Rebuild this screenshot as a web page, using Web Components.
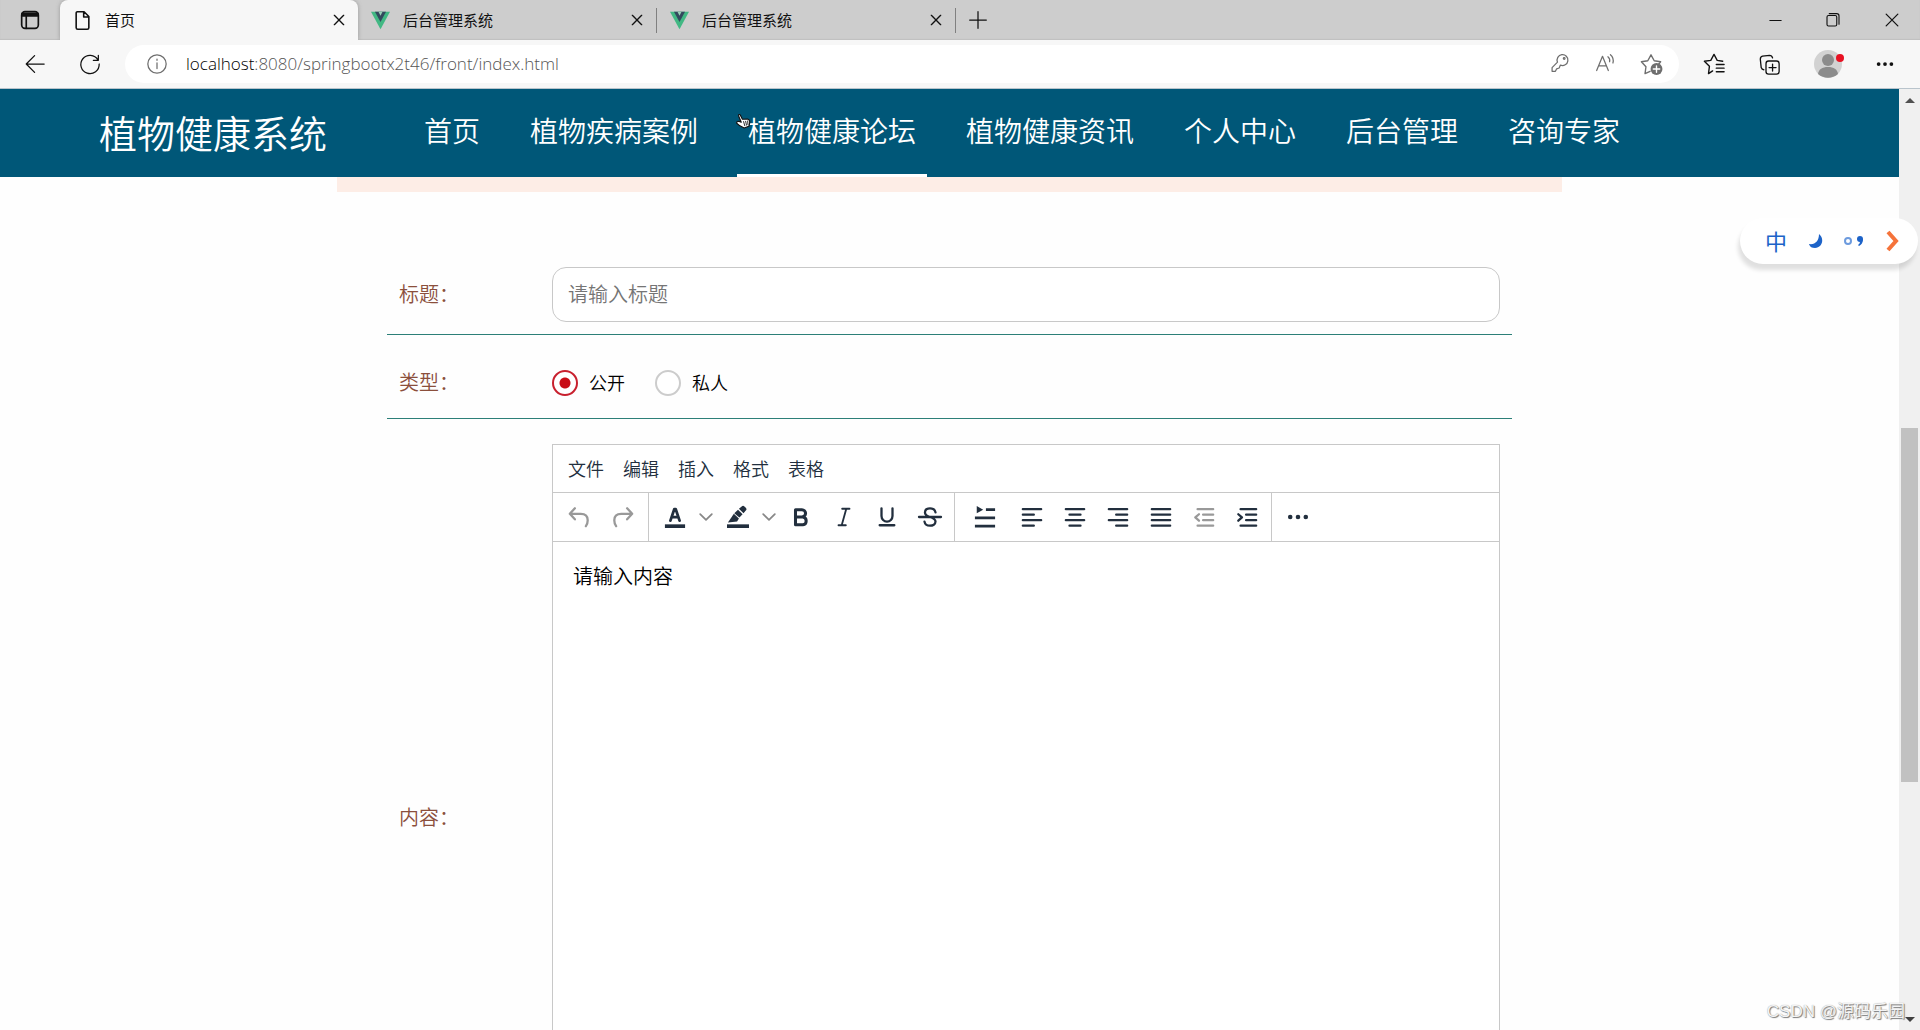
<!DOCTYPE html>
<html lang="zh-CN">
<head>
<meta charset="utf-8">
<title>首页</title>
<style>
    :root {
        --ui: "Open Sans", "Noto Sans CJK SC", sans-serif;
        --color-brand: #005778;
        --color-label: #8b4f3c;
        --color-rule: #2c7f78;
        --color-border: #c8c8c8;
        --color-ink: #222f3e;
    }
    body {
        margin: 0;
        height: 100vh;
        display: flex;
        flex-direction: column;
        overflow: hidden;
        position: relative;
        background: #fefefe;
        font-family: var(--ui);
        font-weight: 350;
    }
    main {
        flex: 1;
        min-height: 0;
        display: flex;
    }
    .page {
        flex: 1;
        min-width: 0;
        overflow: hidden;
    }
</style>
</head>
<body>

<browser-chrome></browser-chrome>
<main>
    <div class="page">
        <site-header></site-header>
        <post-form></post-form>
    </div>
    <scroll-track></scroll-track>
</main>
<ime-bar></ime-bar>
<page-watermark>CSDN @源码乐园</page-watermark>

<script>
// Line icons. All are drawn on a 24 x 24 grid.
const ICONS = {
    panel: '<rect x="2" y="2" width="20" height="20" rx="4"/><path d="M3 4.500h18M3 6.500h18" stroke-width="3"/><path d="M7.500 8v14"/>',
    file: '<path d="M4 2.500a1.500 1.500 0 0 1 1.500-1.500H14l6 6V21a2 2 0 0 1-2 2H6a2 2 0 0 1-2-2zM13.500 1v6.500H20"/>',
    vue: '<path d="M0 1h24L12 23z" fill="#41b883" stroke="none"/><path d="M5 1h14l-7 13z" fill="#34495e" stroke="none"/><path d="M9.500 1h5L12 6z" fill="#9ad1b8" stroke="none"/>',
    close: '<path d="M5 5l14 14M19 5L5 19"/>',
    plus: '<path d="M12 2v20M2 12h20"/>',
    minimize: '<path d="M4 12h16"/>',
    restore: '<rect x="4" y="6" width="13" height="14" rx="2"/><path d="M7 3.500h10a3 3 0 0 1 3 3v11"/>',
    back: '<path d="M23 12H1.500M11.500 2L1.500 12l10 10"/>',
    reload: '<path d="M21.500 7A11 11 0 1 0 23 12M22 1.500V7.500h-6"/>',
    info: '<circle cx="12" cy="12" r="11"/><path d="M12 10.500v7M12 6v1.500"/>',
    key: '<path d="M12.500 14.500a6.500 6.500 0 1 0-3.500-3.500L2.500 17.500V22h4l1.500-3 3-1z"/><circle cx="17" cy="6.500" r="1"/>',
    read: '<path d="M2 21L9 4l7 17M4.500 15.500h9M15.500 4.500c2 1.500 2.500 4 2 6M18.500 2c3 2.500 4 6 3 10"/>',
    starAdd: '<path d="M11 20l-5.500 2.500 1-7.500L1.500 9.500l7-1L12 2l3.500 6.500 7 1-2 2.500"/><circle cx="18" cy="17.500" r="6.500" fill="#6e6e6e" stroke="none"/><path d="M18 14v7M14.500 17.500h7" stroke="#fff"/>',
    starList: '<path d="M10.500 19.500L6 22.500l1-8L1.500 9l7-1L12 1.500 15.500 8l6 1M14.500 12.500H23M14.500 16.500H23M14.500 20.500H23"/>',
    collect: '<rect x="8" y="8" width="15" height="15" rx="3"/><path d="M15.500 11.500v8M11.500 15.500h8M5.500 18c-2 0-2.500-1-3-2.500L1.500 6c0-2 .5-3 2.500-3.500L12 1.500c2 0 3 1 3.500 3"/>',
    dots: '<g fill="currentColor" stroke="none"><circle cx="3.500" cy="12" r="2.500"/><circle cx="12" cy="12" r="2.500"/><circle cx="20.500" cy="12" r="2.500"/></g>',
    undo: '<path d="M7.500 2.500L2 8.500l5.500 6M2.500 8.500H14c5 0 7.500 3 7.500 7 0 2.500-.5 4.500-2 6.500"/>',
    redo: '<path d="M16.500 2.500l5.500 6-5.500 6M21.500 8.500H10c-5 0-7.500 3-7.500 7 0 2.500.5 4.500 2 6.500"/>',
    caret: '<path d="M2 7l10 10L22 7"/>',
    foreColor: '<path d="M7 16L11.200 3.500h1.600L17 16M8.500 12h7" stroke-width="3"/><path d="M1 22h22" stroke-width="4" stroke-linecap="butt"/>',
    backColor: '<g fill="currentColor" stroke="none"><path d="M13 3l3-2.500c1-1 2-1 3 0L20.500 2c1 1 1 2 0 3l-2.500 3z"/><path d="M12 4l5 5-3.500 3.500L8 8z"/><path d="M7.500 8.500l5.500 5-2 3.500L1 18z"/></g><path d="M0 22h24" stroke-width="4" stroke-linecap="butt"/>',
    bold: '<path d="M6 4h7a4 4 0 0 1 0 8H6zM6 12h8a4.300 4.300 0 0 1 0 8.500H6z" stroke-width="3.300"/>',
    italic: '<path d="M10 3h8M6 21h8M14.500 3l-5 18" stroke-width="2"/>',
    underline: '<path d="M6 2.500v8.500a6 6 0 0 0 12 0V2.500M4 21h16"/>',
    strike: '<path d="M18 7c-.5-3-3-4.500-6-4.500S6.500 4 6.500 7 9 11 12 12s6 2 6 5-3 4.500-6 4.500S6.500 20 6 17M0 12h24"/>',
    lineHeight: '<path d="M3 0l7 4-7 4z" fill="currentColor" stroke="none"/><path d="M13 4h10M1 13h22M1 22h22" stroke-width="3" stroke-linecap="butt"/>',
    left: '<path d="M2 3.500h20M2 9.500h12M2 15.500h20M2 21.500h12"/>',
    center: '<path d="M2 3.500h20M6 9.500h12M2 15.500h20M6 21.500h12"/>',
    right: '<path d="M2 3.500h20M10 9.500h12M2 15.500h20M10 21.500h12"/>',
    justify: '<path d="M2 3.500h20M2 9.500h20M2 15.500h20M2 21.500h20"/>',
    outdent: '<path d="M5 3.500h17M11 9.500h11M11 15.500h11M5 21.500h17M6.500 9l-4 3.500 4 3.500"/>',
    indent: '<path d="M5 3.500h17M11 9.500h11M11 15.500h11M5 21.500h17M2.500 9l4 3.500-4 3.500"/>',
    hand: '<path d="M9 14L4.500 3.500C3.500 1 6.500 0 7.500 2L11 9l9-.5c2 .5 3 1.500 3.500 4 .5 3-.5 5.500-1.500 8.500l-8 3C9.500 22 5 20 1 15.500c0-3 4-4 8-1.500z" fill="#fff" stroke="#111"/><path d="M13 13l2 7M16.500 12.500l1.500 6.500M20 12l.5 6" stroke="#111" stroke-width="1.500"/>'
};

customElements.define('ui-icon', class extends HTMLElement {
    constructor() {
        super();
        const size = this.getAttribute('size') || 20;
        const weight = this.getAttribute('weight') || 1.5;
        const shadowRoot = this.attachShadow({mode: 'open'});
        shadowRoot.innerHTML = `
        <style>
            :host { display: inline-flex; flex: none; }
            svg { display: block; overflow: visible; }
        </style>
        <svg width="${size}" height="${size}" viewBox="0 0 24 24" fill="none" stroke="currentColor"
             stroke-width="${weight}" stroke-linecap="round" stroke-linejoin="round" aria-hidden="true">
            ${ICONS[this.getAttribute('name')]}
        </svg>`;
    }
});

customElements.define('browser-tab', class extends HTMLElement {
    constructor() {
        super();
        const shadowRoot = this.attachShadow({mode: 'open'});
        shadowRoot.innerHTML = `
        <style>
            :host {
                display: flex;
                align-items: center;
                flex: 0 1 298px;
                height: 40px;
                box-sizing: border-box;
                padding: 0 11px 0 13px;
            }
            :host([active]) {
                background: #f7f7f7;
                border-radius: 8px 8px 0 0;
                box-shadow: 0 0 4px #999;
            }
            button {
                border: 0;
                padding: 0;
                background: none;
                font: inherit;
                font-weight: 400;
                color: #111;
                display: flex;
            }
            .tab__title {
                flex: 1;
                align-items: center;
                gap: 13px;
                font-size: 15px;
                line-height: 20px;
            }
        </style>
        <button class="tab__title"><ui-icon name="${this.getAttribute('icon')}" size="19" weight="2"></ui-icon><slot></slot></button>
        <button aria-label="关闭"><ui-icon name="close" size="16" weight="2"></ui-icon></button>`;
    }
});

customElements.define('browser-chrome', class extends HTMLElement {
    constructor() {
        super();
        const shadowRoot = this.attachShadow({mode: 'open'});
        shadowRoot.innerHTML = `
        <style>
            :host {
                display: block;
                flex: none;
                border-bottom: 1px solid #b9c4cc;
                background: #f7f7f7;
            }
            button {
                border: 0;
                padding: 0;
                background: none;
                color: #111;
                display: flex;
            }
            .tabs {
                display: flex;
                align-items: center;
                height: 40px;
                background: #cdcdcd;
                box-shadow: inset 0 -1px 1px #c0c0c0;
                overflow: hidden;
            }
            .tabs__panel { padding: 0 20px; }
            .tabs__rule {
                width: 1px;
                height: 25px;
                background: #808080;
            }
            .tabs__new { padding: 0 12px; }
            .window {
                margin-left: auto;
                display: flex;
                align-items: center;
                gap: 40px;
                padding-right: 18px;
            }
            .toolbar {
                display: flex;
                align-items: center;
                height: 48px;
            }
            .toolbar__nav {
                display: flex;
                gap: 35px;
                padding: 0 25px;
            }
            .address {
                flex: 1;
                display: flex;
                align-items: center;
                height: 38px;
                border-radius: 19px;
                background: #fff;
                padding: 0 17px 0 22px;
                color: #6e6e6e;
            }
            .address button { color: #6e6e6e; }
            .address__url {
                flex: 1;
                padding-left: 19px;
                font-size: 17px;
                font-weight: 320;
                line-height: 24px;
                color: #555;
            }
            .address__url b { font-weight: inherit; color: #000; }
            .address__tools { display: flex; gap: 25px; }
            .tools {
                display: flex;
                align-items: center;
                gap: 34px;
                padding: 0 26px 0 24px;
            }
            .avatar {
                position: relative;
                width: 28px;
                height: 28px;
            }
            .avatar__dot {
                position: absolute;
                top: 4px;
                right: -2px;
                width: 8px;
                height: 8px;
                border-radius: 50%;
                background: #e81123;
            }
        </style>
        <div class="tabs">
            <button class="tabs__panel" aria-label="标签页"><ui-icon name="panel" weight="2"></ui-icon></button>
            <browser-tab icon="file" active>首页</browser-tab>
            <browser-tab icon="vue">后台管理系统</browser-tab>
            <span class="tabs__rule"></span>
            <browser-tab icon="vue">后台管理系统</browser-tab>
            <span class="tabs__rule"></span>
            <button class="tabs__new" aria-label="新建标签页"><ui-icon name="plus"></ui-icon></button>
            <div class="window">
                <button aria-label="最小化"><ui-icon name="minimize" size="17"></ui-icon></button>
                <button aria-label="还原"><ui-icon name="restore" size="18"></ui-icon></button>
                <button aria-label="关闭窗口"><ui-icon name="close" size="20"></ui-icon></button>
            </div>
        </div>
        <div class="toolbar">
            <div class="toolbar__nav">
                <button aria-label="后退"><ui-icon name="back"></ui-icon></button>
                <button aria-label="刷新"><ui-icon name="reload"></ui-icon></button>
            </div>
            <div class="address">
                <ui-icon name="info"></ui-icon>
                <div class="address__url" role="textbox" aria-label="地址" tabindex="0"><b>localhost</b>:8080/springbootx2t46/front/index.html</div>
                <div class="address__tools">
                    <button aria-label="密码"><ui-icon name="key"></ui-icon></button>
                    <button aria-label="朗读"><ui-icon name="read"></ui-icon></button>
                    <button aria-label="收藏此页"><ui-icon name="starAdd" size="22"></ui-icon></button>
                </div>
            </div>
            <div class="tools">
                <button aria-label="收藏夹"><ui-icon name="starList" size="22"></ui-icon></button>
                <button aria-label="集锦"><ui-icon name="collect" size="21"></ui-icon></button>
                <button class="avatar" aria-label="用户">
                    <svg width="28" height="28" viewBox="0 0 28 28"><circle cx="14" cy="14" r="14" fill="#d2d2d2"/><circle cx="14" cy="10" r="6" fill="#8c8c8c"/><path d="M4 24c1-5 4-7 10-7s9 2 10 7c-6 5-14 5-20 0z" fill="#8c8c8c"/></svg>
                    <span class="avatar__dot"></span>
                </button>
                <button aria-label="更多"><ui-icon name="dots" size="18"></ui-icon></button>
            </div>
        </div>`;
    }
});

customElements.define('site-header', class extends HTMLElement {
    constructor() {
        super();
        const shadowRoot = this.attachShadow({mode: 'open'});
        shadowRoot.innerHTML = `
        <style>
            :host {
                display: flex;
                align-items: flex-end;
                height: 88px;
                padding-left: 99px;
                background: var(--color-brand);
                color: #fff;
                white-space: nowrap;
            }
            h1 {
                margin: 0;
                font-size: 38px;
                line-height: 88px;
                font-weight: inherit;
            }
            nav {
                display: flex;
                gap: 28px;
                margin-left: 86px;
            }
            a {
                position: relative;
                padding: 0 11px;
                border-bottom: 3px solid transparent;
                font-size: 28px;
                line-height: 86px;
                color: inherit;
                text-decoration: none;
            }
            a[aria-current] { border-color: #fff; }
            .pointer {
                position: absolute;
                left: -1px;
                top: 26px;
            }
        </style>
        <h1>植物健康系统</h1>
        <nav>
            <a href="#home">首页</a>
            <a href="#cases">植物疾病案例</a>
            <a href="#forum" aria-current="page">植物健康论坛<ui-icon class="pointer" name="hand" size="14" weight="2"></ui-icon></a>
            <a href="#news">植物健康资讯</a>
            <a href="#me">个人中心</a>
            <a href="#admin">后台管理</a>
            <a href="#expert">咨询专家</a>
        </nav>`;
    }
});

customElements.define('form-row', class extends HTMLElement {
    constructor() {
        super();
        const shadowRoot = this.attachShadow({mode: 'open'});
        shadowRoot.innerHTML = `
        <style>
            :host {
                display: grid;
                grid-template-columns: 153px 1fr;
                align-items: center;
                margin-top: 13px;
                padding: 12px;
                border-bottom: 1px solid var(--color-rule);
            }
            .row__label {
                color: var(--color-label);
                font-size: 20px;
                line-height: 28px;
            }
            .row__control {
                display: flex;
                align-items: center;
                gap: 30px;
                min-height: 46px;
            }
        </style>
        <div class="row__label"><slot name="label"></slot></div>
        <div class="row__control"><slot></slot></div>`;
    }
});

customElements.define('rich-editor', class extends HTMLElement {
    constructor() {
        super();
        const button = (name, label, extra = '') =>
            `<button type="button" aria-label="${label}" ${extra}><ui-icon name="${name}" size="22" weight="2.500"></ui-icon></button>`;
        const caret = '<button type="button" class="caret" aria-label="选择颜色"><ui-icon name="caret" size="14" weight="3"></ui-icon></button>';
        const shadowRoot = this.attachShadow({mode: 'open'});
        shadowRoot.innerHTML = `
        <style>
            :host {
                display: flex;
                flex-direction: column;
                flex: 1;
                height: 746px;
                border: 1px solid var(--color-border);
                background: #fff;
                color: var(--color-ink);
            }
            button {
                border: 0;
                padding: 0;
                background: none;
                font: inherit;
                color: inherit;
            }
            .menu {
                display: flex;
                align-items: center;
                gap: 19px;
                height: 47px;
                padding: 0 15px;
                border-bottom: 1px solid var(--color-border);
                font-size: 18px;
                line-height: 24px;
            }
            .tools {
                display: flex;
                height: 48px;
                border-bottom: 1px solid var(--color-border);
            }
            .tools__group {
                display: flex;
                padding: 0 3px 0 4px;
                border-right: 1px solid var(--color-border);
            }
            .tools__group:last-child { border-right: 0; }
            .tools button {
                display: flex;
                align-items: center;
                justify-content: center;
                width: 43px;
            }
            .tools button[disabled] { color: #999; }
            .tools .caret { width: 20px; color: #888; }
            .tools .wide { width: 51px; }
            .tools .more { width: 44px; }
            .tools__group:first-child button { width: 44px; }
        </style>
        <div class="menu">
            <button type="button">文件</button>
            <button type="button">编辑</button>
            <button type="button">插入</button>
            <button type="button">格式</button>
            <button type="button">表格</button>
        </div>
        <div class="tools">
            <div class="tools__group">${button('undo', '撤销', 'disabled')}${button('redo', '重做', 'disabled')}</div>
            <div class="tools__group">
                ${button('foreColor', '文字颜色')}${caret}${button('backColor', '背景颜色')}${caret}
                ${button('bold', '粗体')}${button('italic', '斜体')}${button('underline', '下划线')}${button('strike', '删除线')}
            </div>
            <div class="tools__group">
                ${button('lineHeight', '行高', 'class="wide"')}
                ${button('left', '左对齐')}${button('center', '居中')}${button('right', '右对齐')}${button('justify', '两端对齐')}
                ${button('outdent', '减少缩进', 'disabled')}${button('indent', '增加缩进')}
            </div>
            <div class="tools__group">${button('dots', '更多', 'class="more"')}</div>
        </div>
        <slot></slot>`;
    }
});

customElements.define('post-form', class extends HTMLElement {
    constructor() {
        super();
        const shadowRoot = this.attachShadow({mode: 'open'});
        shadowRoot.innerHTML = `
        <style>
            :host {
                display: block;
                max-width: 1225px;
                margin: 0 auto;
            }
            .banner {
                height: 15px;
                background: #fdede6;
            }
            form { padding: 50px 50px 0; }
            input[type=text] {
                flex: 1;
                min-width: 0;
                height: 55px;
                box-sizing: border-box;
                border: 1px solid var(--color-border);
                border-radius: 14px;
                padding: 0 15px;
                background: #fff;
                font: inherit;
                font-size: 20px;
            }
            ::placeholder { color: #757575; opacity: 1; }
            .choice {
                display: flex;
                align-items: center;
                gap: 11px;
                font-size: 18px;
                line-height: 25px;
                color: #000;
            }
            input[type=radio] {
                appearance: none;
                width: 26px;
                height: 26px;
                margin: 0;
                border: 2px solid #ccc;
                border-radius: 50%;
                background: #fff;
            }
            input[type=radio]:checked {
                border-color: #c8202e;
                background: radial-gradient(circle, #c80d16 5px, #fff 6px);
            }
            textarea {
                flex: 1;
                box-sizing: border-box;
                border: 0;
                outline: 0;
                padding: 20px;
                resize: none;
                background: none;
                font: inherit;
                font-size: 20px;
                line-height: 30px;
                color: #000;
            }
        </style>
        <div class="banner"></div>
        <form>
            <form-row>
                <label slot="label" for="title">标题：</label>
                <input type="text" id="title" placeholder="请输入标题">
            </form-row>
            <form-row>
                <span slot="label">类型：</span>
                <label class="choice"><input type="radio" name="type" checked>公开</label>
                <label class="choice"><input type="radio" name="type">私人</label>
            </form-row>
            <form-row>
                <label slot="label" for="content">内容：</label>
                <rich-editor><textarea id="content">请输入内容</textarea></rich-editor>
            </form-row>
        </form>`;
    }
});

customElements.define('scroll-track', class extends HTMLElement {
    constructor() {
        super();
        const shadowRoot = this.attachShadow({mode: 'open'});
        shadowRoot.innerHTML = `
        <style>
            :host {
                display: flex;
                flex-direction: column;
                flex: none;
                width: 21px;
                background: #f0f0f0;
            }
            svg { flex: none; }
            .before { flex: 315; }
            .thumb { flex: 354; margin: 0 2px; background: #c1c1c1; }
            .after { flex: 224; }
        </style>
        <svg width="21" height="24" viewBox="0 0 21 24"><path d="M6 14l5-5 5 5z" fill="#505050"/></svg>
        <div class="before"></div>
        <div class="thumb"></div>
        <div class="after"></div>
        <svg width="21" height="24" viewBox="0 0 21 24"><path d="M6 11l5 5 5-5z" fill="#404040"/></svg>`;
    }
});

customElements.define('ime-bar', class extends HTMLElement {
    constructor() {
        super();
        const shadowRoot = this.attachShadow({mode: 'open'});
        shadowRoot.innerHTML = `
        <style>
            :host {
                position: absolute;
                top: 218px;
                right: 2px;
                display: flex;
                align-items: center;
                justify-content: space-between;
                box-sizing: border-box;
                width: 178px;
                height: 46px;
                padding: 0 19px 0 25px;
                border-radius: 23px;
                background: #fff;
                box-shadow: -2px 6px 4px rgba(0, 0, 0, .12);
                color: #1d63c8;
            }
            button {
                border: 0;
                padding: 0;
                background: none;
                color: inherit;
                font: 400 22px/26px var(--ui);
            }
            svg { display: block; }
        </style>
        <button>中</button>
        <button aria-label="半角"><svg width="16" height="16" viewBox="0 0 16 16"><path d="M11 1c6 5 3 14-4 14-3 0-5-1-6-4 6 1 10-3 10-10z" fill="currentColor"/></svg></button>
        <button aria-label="中文标点"><svg width="20" height="16" viewBox="0 0 20 16"><circle cx="4" cy="8" r="3" fill="none" stroke="#6d9bde" stroke-width="2"/><circle cx="16" cy="6" r="3" fill="currentColor"/><path d="M19 6c0 4-2 6-4 7l-1-1c2-1 2-3 2-5z" fill="currentColor"/></svg></button>
        <button aria-label="展开"><svg width="14" height="22" viewBox="0 0 14 22"><path d="M3 2l8 9-8 9" fill="none" stroke="#f5733a" stroke-width="4"/></svg></button>`;
    }
});

customElements.define('page-watermark', class extends HTMLElement {
    constructor() {
        super();
        const shadowRoot = this.attachShadow({mode: 'open'});
        shadowRoot.innerHTML = `
        <style>
            :host {
                position: absolute;
                right: 15px;
                bottom: 6px;
                font: 400 17px/24px "Liberation Sans", "Noto Sans CJK SC", sans-serif;
                color: #f4f4f4;
                text-shadow: 1px 1px 1px #777, 0 0 1px #999;
                white-space: nowrap;
            }
        </style>
        <slot></slot>`;
    }
});
</script>
</body>
</html>
